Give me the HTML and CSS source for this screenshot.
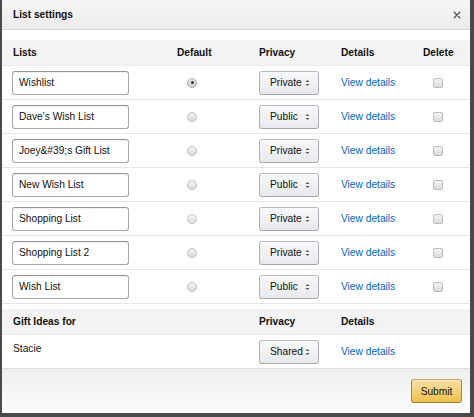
FILE: index.html
```html
<!DOCTYPE html>
<html>
<head>
<meta charset="utf-8">
<link rel="stylesheet" href="styles.css">
</head>
<body>
<div class="frame">
  <div class="modal">
    <div class="titlebar">
      <span class="title">List settings</span>
      <svg class="close" width="8" height="8" viewBox="0 0 8 8"><path d="M1.2 1.2L6.8 6.8M6.8 1.2L1.2 6.8" stroke="#555" stroke-width="1.3" stroke-linecap="round"/></svg>
    </div>
    <div class="gap-top"></div>
    <div class="row head">
      <div>Lists</div><div>Default</div><div>Privacy</div><div>Details</div><div>Delete</div>
    </div>

    <div class="row">
      <div><input class="name" type="text" value="Wishlist"></div>
      <div><span class="radio checked"></span></div>
      <div><div class="select"><span>Private</span><svg width="5" height="8" viewBox="0 0 5 8"><path d="M0.5 3L2.5 1L4.5 3ZM0.5 5L2.5 7L4.5 5Z" fill="#555"/></svg></div></div>
      <div><a class="link">View details</a></div>
      <div><span class="check"></span></div>
    </div>
    <div class="row">
      <div><input class="name" type="text" value="Dave's Wish List"></div>
      <div><span class="radio"></span></div>
      <div><div class="select"><span>Public</span><svg width="5" height="8" viewBox="0 0 5 8"><path d="M0.5 3L2.5 1L4.5 3ZM0.5 5L2.5 7L4.5 5Z" fill="#555"/></svg></div></div>
      <div><a class="link">View details</a></div>
      <div><span class="check"></span></div>
    </div>
    <div class="row">
      <div><input class="name" type="text" value="Joey&amp;#39;s Gift List"></div>
      <div><span class="radio"></span></div>
      <div><div class="select"><span>Private</span><svg width="5" height="8" viewBox="0 0 5 8"><path d="M0.5 3L2.5 1L4.5 3ZM0.5 5L2.5 7L4.5 5Z" fill="#555"/></svg></div></div>
      <div><a class="link">View details</a></div>
      <div><span class="check"></span></div>
    </div>
    <div class="row">
      <div><input class="name" type="text" value="New Wish List"></div>
      <div><span class="radio"></span></div>
      <div><div class="select"><span>Public</span><svg width="5" height="8" viewBox="0 0 5 8"><path d="M0.5 3L2.5 1L4.5 3ZM0.5 5L2.5 7L4.5 5Z" fill="#555"/></svg></div></div>
      <div><a class="link">View details</a></div>
      <div><span class="check"></span></div>
    </div>
    <div class="row">
      <div><input class="name" type="text" value="Shopping List"></div>
      <div><span class="radio"></span></div>
      <div><div class="select"><span>Private</span><svg width="5" height="8" viewBox="0 0 5 8"><path d="M0.5 3L2.5 1L4.5 3ZM0.5 5L2.5 7L4.5 5Z" fill="#555"/></svg></div></div>
      <div><a class="link">View details</a></div>
      <div><span class="check"></span></div>
    </div>
    <div class="row">
      <div><input class="name" type="text" value="Shopping List 2"></div>
      <div><span class="radio"></span></div>
      <div><div class="select"><span>Private</span><svg width="5" height="8" viewBox="0 0 5 8"><path d="M0.5 3L2.5 1L4.5 3ZM0.5 5L2.5 7L4.5 5Z" fill="#555"/></svg></div></div>
      <div><a class="link">View details</a></div>
      <div><span class="check"></span></div>
    </div>
    <div class="row">
      <div><input class="name" type="text" value="Wish List"></div>
      <div><span class="radio"></span></div>
      <div><div class="select"><span>Public</span><svg width="5" height="8" viewBox="0 0 5 8"><path d="M0.5 3L2.5 1L4.5 3ZM0.5 5L2.5 7L4.5 5Z" fill="#555"/></svg></div></div>
      <div><a class="link">View details</a></div>
      <div><span class="check"></span></div>
    </div>

    <div class="row head gift-head">
      <div>Gift Ideas for</div><div></div><div>Privacy</div><div>Details</div><div></div>
    </div>
    <div class="row gift-row">
      <div class="stacie">Stacie</div>
      <div></div>
      <div><div class="select"><span>Shared</span><svg width="5" height="8" viewBox="0 0 5 8"><path d="M0.5 3L2.5 1L4.5 3ZM0.5 5L2.5 7L4.5 5Z" fill="#555"/></svg></div></div>
      <div><a class="link">View details</a></div>
      <div></div>
    </div>

    <div class="footer">
      <button class="submit">Submit</button>
    </div>
  </div>
</div>
</body>
</html>
```

FILE: styles.css
```css
* { box-sizing: border-box; }
html, body { margin: 0; padding: 0; }
body {
  font-family: "Liberation Sans", Arial, sans-serif;
  font-size: 10.2px;
  color: #111;
  background: #fff;
}
.frame {
  width: 474px;
  height: 417px;
  background: #4a4a4a;
  padding: 0 4px 4px 2px;
}
.modal {
  width: 468px;
  height: 413px;
  background: #fff;
  display: flex;
  flex-direction: column;
}
.titlebar {
  height: 30px;
  flex: none;
  display: flex;
  align-items: center;
  justify-content: space-between;
  padding: 0 9px 0 11px;
  background: linear-gradient(#f6f6f6, #ebebeb);
  border-bottom: 1px solid #d6d6d6;
}
.title { font-weight: bold; }
.close { display: block; }
.gap-top { height: 10px; flex: none; }
.row {
  display: grid;
  grid-template-columns: 165px 82px 82px 82px 1fr;
  align-items: center;
  height: 34px;
  flex: none;
  padding-left: 10px;
  border-bottom: 1px solid #e7e7e7;
}
.row.head {
  height: 26px;
  background: #f3f3f3;
  font-weight: bold;
  border-bottom: 1px solid #ebebeb;
}
.row.head > div:first-child { padding-left: 1px; }
.gift-head { margin-top: 5px; height: 25px; }
.gift-row { border-bottom: 1px solid #dcdcdc; }
.stacie { align-self: start; padding: 8px 0 0 1px; }
.name {
  display: block;
  width: 117px;
  height: 24px;
  margin: 0;
  padding: 0 0 0 6px;
  font: inherit;
  color: #111;
  border: 1px solid #a6a6a6;
  border-top-color: #949494;
  border-radius: 3px;
  box-shadow: inset 0 1px 0 rgba(0,0,0,.06);
  outline: none;
  background: #fff;
}
.radio {
  display: block;
  width: 10px;
  height: 10px;
  margin-left: 10px;
  border-radius: 50%;
  border: 1px solid #c0c0c0;
  background: linear-gradient(#f4f4f4, #dadada);
  position: relative;
}
.radio.checked { border-color: #a8a8a8; background: linear-gradient(#e8e8e8, #d0d0d0); }
.radio.checked::after {
  content: "";
  position: absolute;
  left: 2.5px; top: 2.5px;
  width: 3px; height: 3px;
  border-radius: 50%;
  background: #333;
}
.select {
  width: 60px;
  height: 24px;
  display: flex;
  align-items: center;
  justify-content: space-between;
  padding: 0 8px 0 10px;
  border: 1px solid #adb1b8;
  border-top-color: #b7bac0;
  border-bottom-color: #a2a6ac;
  border-radius: 3px;
  background: linear-gradient(#f7f8fa, #e7e9ec);
  box-shadow: 0 1px 0 rgba(255,255,255,.6) inset;
}
.select svg { display: block; }
.link { color: #0066c0; text-decoration: none; }
.check {
  display: block;
  width: 10px;
  height: 10px;
  margin-left: 10px;
  border: 1px solid #bdbdbd;
  border-radius: 2px;
  background: linear-gradient(#f3f3f3, #dbdbdb);
}
.footer {
  flex: 1;
  display: flex;
  align-items: center;
  justify-content: flex-end;
  padding: 0 8px 0 0;
  background: linear-gradient(#efefef, #fcfcfc);
}
.submit {
  width: 51px;
  height: 24px;
  font: inherit;
  color: #111;
  border: 1px solid #a88734;
  border-top-color: #c6a65a;
  border-bottom-color: #9c7e31;
  border-radius: 3px;
  background: linear-gradient(#f7dfa5, #f0c14b);
  box-shadow: 0 1px 0 rgba(255,255,255,.4) inset;
  padding: 0;
}
```
